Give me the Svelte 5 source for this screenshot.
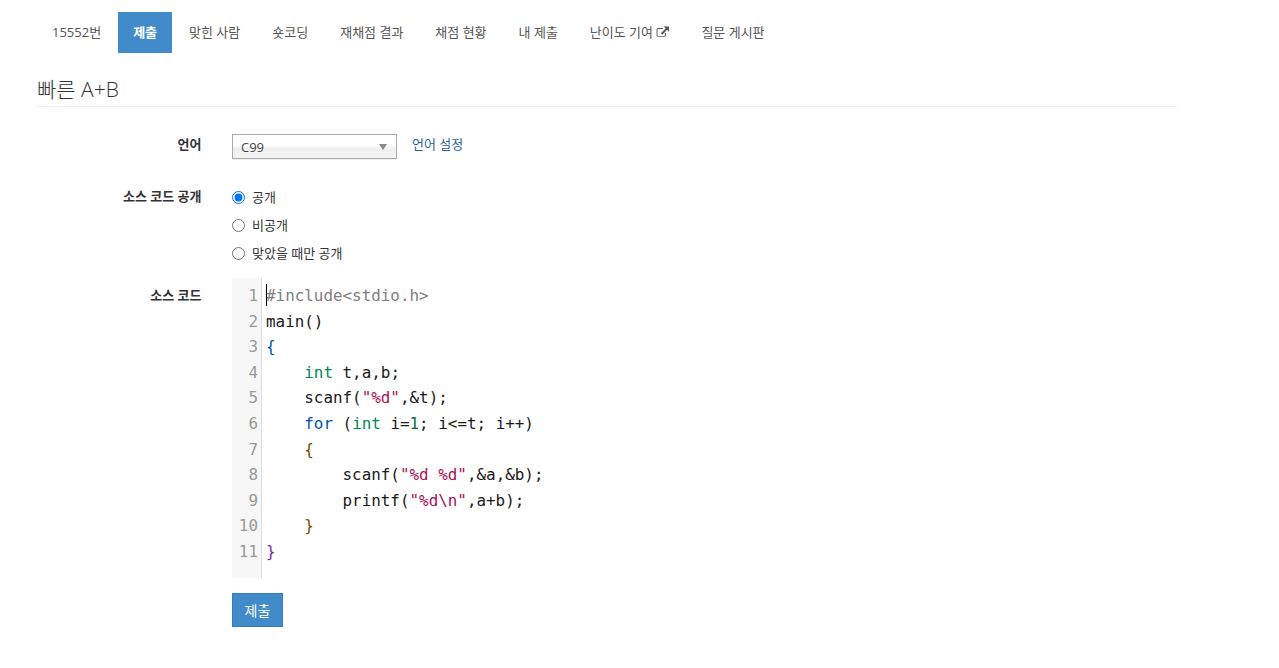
<script>
  const tabs = [
    { label: "15552번" },
    { label: "제출", active: true },
    { label: "맞힌 사람" },
    { label: "숏코딩" },
    { label: "재채점 결과" },
    { label: "채점 현황" },
    { label: "내 제출" },
    { label: "난이도 기여", external: true },
    { label: "질문 게시판" },
  ];

  const visibility = ["공개", "비공개", "맞았을 때만 공개"];
  let selected = $state("공개");

  // t: token class for each piece of a line
  const lines = [
    [["m", "#include<stdio.h>"]],
    [["", "main()"]],
    [["b1", "{"]],
    [["", "    "], ["ty", "int"], ["", " t,a,b;"]],
    [["", "    scanf("], ["s", "\"%d\""], ["", ",&t);"]],
    [["", "    "], ["k", "for"], ["", " ("], ["ty", "int"], ["", " i="], ["n", "1"], ["", "; i<=t; i++)"]],
    [["", "    "], ["b2", "{"]],
    [["", "        scanf("], ["s", "\"%d %d\""], ["", ",&a,&b);"]],
    [["", "        printf("], ["s", "\"%d\\n\""], ["", ",a+b);"]],
    [["", "    "], ["b2", "}"]],
    [["b3", "}"]],
  ];
</script>

<div class="page">
  <nav>
    <ul class="tabs">
      {#each tabs as tab}
        <li>
          <a href="#top" class:active={tab.active}>
            {tab.label}
            {#if tab.external}
              <svg class="ext" viewBox="0 0 14 12" width="13" height="12" aria-hidden="true">
                <path d="M10.6 7v2.4a1.8 1.8 0 0 1-1.8 1.8H2.4A1.8 1.8 0 0 1 .6 9.4V3.6a1.8 1.8 0 0 1 1.8-1.8h5.2v1H2.4a.8.8 0 0 0-.8.8v5.8c0 .44.36.8.8.8h6.4a.8.8 0 0 0 .8-.8V7z" fill="currentColor" />
                <path d="M8.3 0H14v5.700l-2-2-5.200 5.200-1.600-1.600 5.200-5.200z" fill="currentColor" />
              </svg>
            {/if}
          </a>
        </li>
      {/each}
    </ul>
  </nav>

  <h1>빠른 A+B</h1>

  <form onsubmit={(e) => e.preventDefault()}>
    <div class="row row-lang">
      <div class="label">언어</div>
      <div class="field lang">
        <div class="select">
          <span>C99</span>
          <i class="arrow"></i>
        </div>
        <a class="link" href="#top">언어 설정</a>
      </div>
    </div>

    <div class="row row-vis">
      <div class="label">소스 코드 공개</div>
      <div class="field radios">
        {#each visibility as v}
          <label>
            <input type="radio" name="vis" value={v} bind:group={selected} />
            {v}
          </label>
        {/each}
      </div>
    </div>

    <div class="row row-code">
      <div class="label">소스 코드</div>
      <div class="field">
        <div class="editor">
          <div class="gutter">
            {#each lines as _, i}
              <div>{i + 1}</div>
            {/each}
          </div>
          <pre class="code">{#each lines as line, i}<div class="line">{#if i === 0}<i class="cursor"></i>{/if}{#each line as [t, text]}<span class={t}>{text}</span>{/each}</div>{/each}</pre>
        </div>
        <button type="submit">제출</button>
      </div>
    </div>
  </form>
</div>

<style>
  :global(body) {
    margin: 0;
    background: #fff;
    color: #333;
    font-family: "Open Sans", "Noto Sans CJK KR", sans-serif;
    font-size: 13px;
  }

  .page {
    width: 1140px;
    margin-left: 37px;
    padding-top: 12px;
  }

  .tabs {
    display: flex;
    list-style: none;
    margin: 0;
    padding: 0;
  }

  .tabs a {
    display: block;
    height: 41px;
    line-height: 41px;
    padding: 0 15px;
    margin-right: 2px;
    color: #555;
    text-decoration: none;
    white-space: nowrap;
  }

  .tabs a.active {
    background: #428bca;
    color: #fff;
    font-weight: 600;
  }

  .ext {
    vertical-align: -1px;
  }

  h1 {
    margin: 21px 0 0;
    padding-bottom: 2px;
    border-bottom: 1px solid #eee;
    font-size: 21px;
    font-weight: 300;
    line-height: 30px;
    color: #333;
  }

  form {
    padding-top: 27px;
  }

  .row {
    display: flex;
  }

  .label {
    width: 164.500px;
    text-align: right;
    font-weight: 700;
    color: #333;
    line-height: 20px;
  }

  .field {
    margin-left: 30.500px;
  }

  .lang {
    display: flex;
    align-items: flex-start;
    gap: 15px;
  }

  .select {
    position: relative;
    box-sizing: border-box;
    width: 165px;
    height: 25px;
    line-height: 25px;
    padding-left: 8px;
    border: 1px solid #aaa;
    background: linear-gradient(#fff 0%, #fff 45%, #eee 60%, #f4f4f4 100%);
    box-shadow: 0 1px 0 #eee;
    color: #444;
    font-size: 13px;
  }

  .arrow {
    position: absolute;
    right: 9px;
    top: 9px;
    border-left: 4px solid transparent;
    border-right: 4px solid transparent;
    border-top: 6px solid #888;
  }

  .link {
    color: #2a6496;
    text-decoration: none;
    line-height: 20px;
  }

  .row-vis {
    margin-top: 27px;
  }

  .radios {
    display: flex;
    flex-direction: column;
    gap: 8px;
  }

  .radios label {
    display: flex;
    align-items: center;
    gap: 6px;
    height: 20px;
    color: #333;
  }

  .radios input {
    width: 13px;
    height: 13px;
    margin: 2px 1px 0 0;
  }

  .row-code {
    margin-top: 16px;
  }

  .row-code .label {
    padding-top: 7px;
  }

  .editor {
    display: flex;
    width: 945px;
    height: 300px;
    font-family: "DejaVu Sans Mono", "Liberation Mono", monospace;
    font-size: 15.900px;
    line-height: 25.600px;
  }

  .gutter {
    box-sizing: border-box;
    width: 30px;
    padding: 5px 3px 0 0;
    background: #f7f7f7;
    border-right: 1px solid #ddd;
    color: #999;
    text-align: right;
  }

  .code {
    margin: 0;
    padding: 5px 0 0 4px;
    font: inherit;
    color: #1a1a1a;
  }

  .line {
    position: relative;
    height: 25.600px;
  }

  .cursor {
    position: absolute;
    left: 0;
    top: 1px;
    height: 22px;
    border-left: 1px solid #000;
  }

  .m { color: #808080; }
  .ty { color: #008855; }
  .k { color: #0055aa; }
  .s { color: #aa1155; }
  .n { color: #116644; }
  .b1 { color: #0055aa; }
  .b2 { color: #7a4a00; }
  .b3 { color: #7b2a9a; }

  button {
    display: block;
    margin-top: 15px;
    width: 51px;
    height: 34px;
    padding: 0;
    border: 1px solid #357ebd;
    background: #428bca;
    color: #fff;
    font: inherit;
    font-size: 14px;
    font-weight: 400;
  }
</style>
